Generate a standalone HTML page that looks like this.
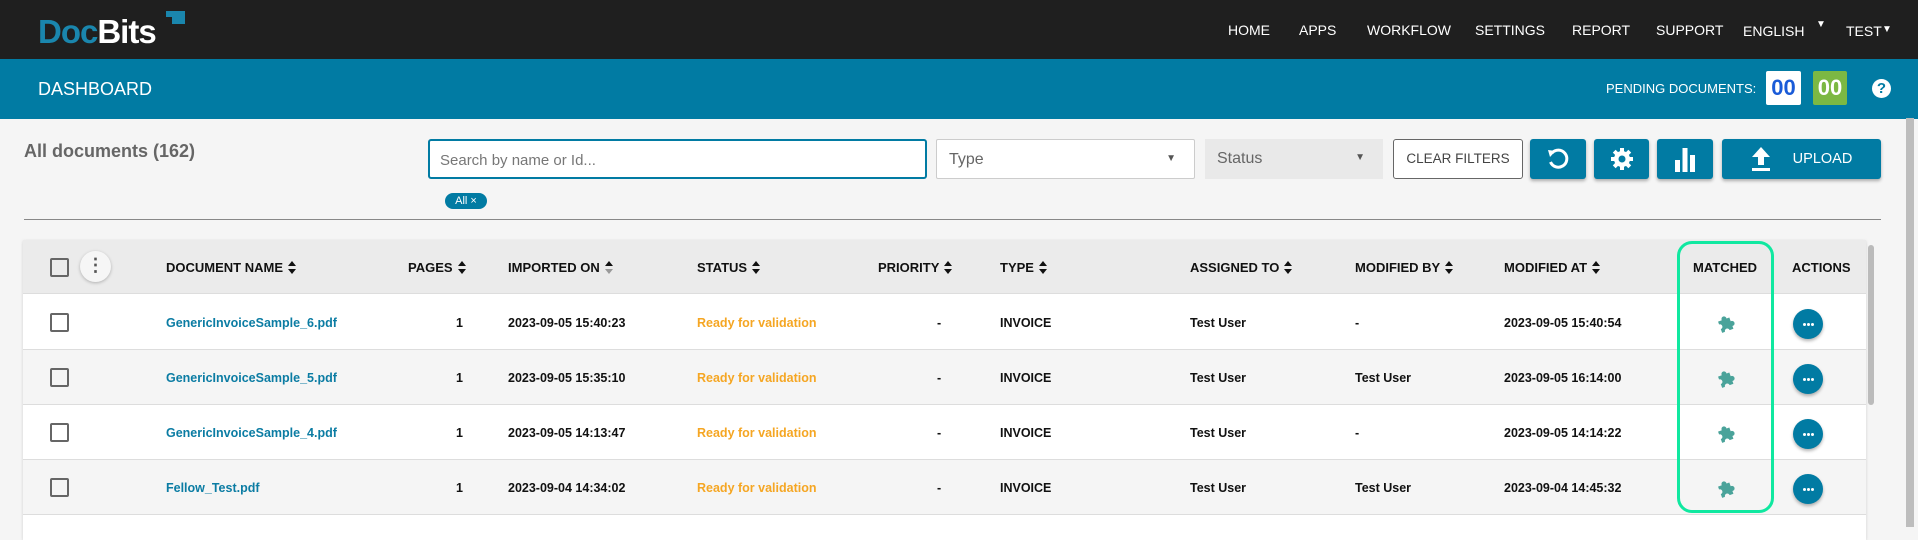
<!DOCTYPE html>
<html><head><meta charset="utf-8"><style>
*{margin:0;padding:0;box-sizing:border-box}
body{width:1918px;height:527px;overflow:hidden;background:#f5f5f5;font-family:"Liberation Sans",sans-serif;position:relative}
.a{position:absolute;white-space:nowrap}
.top{left:0;top:0;width:1918px;height:59px;background:#1f1f1f}
.nav{color:#fff;font-size:14px;top:22px}
.blue{left:0;top:59px;width:1918px;height:60px;background:#017ba3}
.btn{background:#017ba3;border-radius:3px;top:139px;height:40px;box-shadow:0 2px 3px rgba(0,0,0,.3);display:flex;align-items:center;justify-content:center}
.card{left:23px;top:240px;width:1843px;height:300px;background:#fff;box-shadow:0 1px 3px rgba(0,0,0,.15)}
.hdr{left:23px;top:240px;width:1843px;height:54px;background:#ebebeb;border-bottom:1px solid #ddd}
.row{left:23px;width:1843px;height:55px;border-bottom:1px solid #ddd}
.h{font-size:13px;font-weight:bold;color:#111;top:260px}
.t{font-size:12.5px;font-weight:bold;color:#111}
.cb{width:19px;height:19px;border:2px solid #666;border-radius:2px}
.sort{display:inline-block;vertical-align:middle;margin-left:5px;width:8px;height:13px;position:relative;top:-1px}
.sort:before{content:"";position:absolute;top:0;left:0;border-left:4.5px solid transparent;border-right:4.5px solid transparent;border-bottom:5.5px solid #111}
.sort:after{content:"";position:absolute;bottom:0;left:0;border-left:4.5px solid transparent;border-right:4.5px solid transparent;border-top:5.5px solid #111}
.sort.g:after{border-top-color:#999}
.act{width:30px;height:30px;border-radius:50%;background:#017ba3;box-shadow:0 2px 3px rgba(0,0,0,.3)}
.act:before{content:"";position:absolute;left:10px;top:13.5px;width:3px;height:3px;border-radius:50%;background:#fff;box-shadow:4px 0 0 #fff,8px 0 0 #fff}
</style></head><body>
<div class="a top"></div>
<div class="a" style="left:38px;top:13px;font-size:33px;font-weight:bold;letter-spacing:-1px"><span style="color:#1a86ad">Doc</span><span style="color:#fff">Bits</span></div>
<div class="a" style="left:172px;top:11px;width:13px;height:13px;background:#1a86ad"></div>
<div class="a" style="left:166px;top:11px;width:7px;height:6px;background:#1a86ad"></div>
<div class="a nav" style="left:1228px">HOME</div>
<div class="a nav" style="left:1299px">APPS</div>
<div class="a nav" style="left:1367px">WORKFLOW</div>
<div class="a nav" style="left:1475px">SETTINGS</div>
<div class="a nav" style="left:1572px">REPORT</div>
<div class="a nav" style="left:1656px">SUPPORT</div>
<div class="a nav" style="left:1743px;top:23px">ENGLISH</div>
<div class="a nav" style="left:1816px;top:19px;font-size:10px">▼</div>
<div class="a nav" style="left:1846px;top:23px">TEST</div>
<div class="a nav" style="left:1882px;top:24px;font-size:10px">▼</div>
<div class="a blue"></div>
<div class="a" style="left:38px;top:79px;color:#fff;font-size:18px">DASHBOARD</div>
<div class="a" style="left:1606px;top:81px;color:#fff;font-size:13px">PENDING DOCUMENTS:</div>
<div class="a" style="left:1766px;top:71px;width:35px;height:34px;background:#fff;border-radius:2px;color:#1a5bd8;font-size:22px;font-weight:bold;text-align:center;line-height:34px">00</div>
<div class="a" style="left:1813px;top:71px;width:34px;height:34px;background:#7cb843;border-radius:2px;color:#fff;font-size:22px;font-weight:bold;text-align:center;line-height:34px">00</div>
<div class="a" style="left:1872px;top:79px;width:19px;height:19px;border-radius:50%;background:#fff;color:#017ba3;font-size:15px;font-weight:bold;text-align:center;line-height:19px">?</div>
<div class="a" style="left:24px;top:141px;font-size:18px;font-weight:bold;color:#666">All documents (162)</div>
<div class="a" style="left:428px;top:139px;width:499px;height:40px;border:2px solid #017ba3;border-radius:3px;background:#fff;padding:11px 10px;font-size:15px;color:#777">Search by name or Id...</div>
<div class="a" style="left:936px;top:139px;width:259px;height:40px;border:1px solid #ccc;border-radius:2px;background:#fff;padding:11px 12px;font-size:16px;color:#666">Type<span style="position:absolute;right:18px;top:13px;font-size:10px;color:#555">▼</span></div>
<div class="a" style="left:1205px;top:139px;width:178px;height:40px;background:#e9e9e9;padding:11px 12px;font-size:16px;color:#666">Status<span style="position:absolute;right:18px;top:13px;font-size:10px;color:#555">▼</span></div>
<div class="a" style="left:1393px;top:139px;width:130px;height:40px;border:1px solid #666;border-radius:3px;background:#fff;font-size:13.5px;color:#444;text-align:center;line-height:38px">CLEAR FILTERS</div>
<div class="a btn" style="left:1530px;width:56px"><svg width="24" height="24" viewBox="0 0 24 24"><path d="M6 6 A8.5 8.5 0 1 1 4.5 15" fill="none" stroke="#fff" stroke-width="3"/><path d="M2 3 L9.5 4 L4 10 Z" fill="#fff"/></svg></div>
<div class="a btn" style="left:1594px;width:55px"><svg width="24" height="24" viewBox="0 0 24 24"><g fill="#fff"><circle cx="12" cy="12" r="8"/><rect x="10" y="1" width="4" height="22"/><rect x="1" y="10" width="22" height="4"/><rect x="10" y="1" width="4" height="22" transform="rotate(45 12 12)"/><rect x="10" y="1" width="4" height="22" transform="rotate(-45 12 12)"/></g><circle cx="12" cy="12" r="3.5" fill="#017ba3"/></svg></div>
<div class="a btn" style="left:1657px;width:56px"><svg width="24" height="26" viewBox="0 0 24 26"><g fill="#fff"><rect x="2" y="14" width="5" height="12"/><rect x="9.5" y="2" width="5" height="24"/><rect x="17" y="9" width="5" height="17"/></g></svg></div>
<div class="a btn" style="left:1722px;width:159px"><svg width="20" height="26" viewBox="0 0 20 26" style="margin-right:22px"><g fill="#fff"><path d="M10 1 L19 11 H13 V19 H7 V11 H1 Z"/><rect x="1" y="22" width="18" height="3"/></g></svg><span style="color:#fff;font-size:14.5px">UPLOAD</span></div>
<div class="a" style="left:445px;top:193px;width:42px;height:16px;border-radius:8px;background:#017ba3;color:#fff;font-size:11px;text-align:center;line-height:16px">All ×</div>
<div class="a" style="left:24px;top:219px;width:1857px;height:1px;background:#888"></div>
<div class="a card"></div>
<div class="a hdr"></div>
<div class="a row" style="top:295px;background:#fff"></div>
<div class="a row" style="top:350px;background:#f5f5f5"></div>
<div class="a row" style="top:405px;background:#fff"></div>
<div class="a row" style="top:460px;background:#f5f5f5"></div>
<div class="a" style="left:1868px;top:245px;width:6px;height:160px;background:#bbb;border-radius:3px"></div>
<div class="a" style="left:1906px;top:118px;width:8px;height:409px;background:#bdbdbd"></div>
<div class="a cb" style="left:50px;top:258px"></div>
<div class="a" style="left:80px;top:251px;width:31px;height:31px;border-radius:50%;background:#f6f6f6;box-shadow:0 1px 3px rgba(0,0,0,.25);color:#555;font-size:18px;font-weight:bold;text-align:center;line-height:28px">⋮</div>
<div class="a h" style="left:166px">DOCUMENT NAME<span class="sort"></span></div>
<div class="a h" style="left:408px">PAGES<span class="sort"></span></div>
<div class="a h" style="left:508px">IMPORTED ON<span class="sort g"></span></div>
<div class="a h" style="left:697px">STATUS<span class="sort"></span></div>
<div class="a h" style="left:878px">PRIORITY<span class="sort"></span></div>
<div class="a h" style="left:1000px">TYPE<span class="sort"></span></div>
<div class="a h" style="left:1190px">ASSIGNED TO<span class="sort"></span></div>
<div class="a h" style="left:1355px">MODIFIED BY<span class="sort"></span></div>
<div class="a h" style="left:1504px">MODIFIED AT<span class="sort"></span></div>
<div class="a h" style="left:1693px">MATCHED</div>
<div class="a h" style="left:1792px">ACTIONS</div>
<div class="a" style="left:1677px;top:241px;width:97px;height:272px;border:3px solid #10e8a0;border-radius:15px"></div>

<div class="a cb" style="left:50px;top:313px"></div>
<div class="a t" style="left:166px;top:316px;color:#0b7ca3">GenericInvoiceSample_6.pdf</div>
<div class="a t" style="left:456px;top:316px">1</div>
<div class="a t" style="left:508px;top:316px">2023-09-05 15:40:23</div>
<div class="a t" style="left:697px;top:316px;color:#f5a623">Ready for validation</div>
<div class="a t" style="left:937px;top:316px">-</div>
<div class="a t" style="left:1000px;top:316px">INVOICE</div>
<div class="a t" style="left:1190px;top:316px">Test User</div>
<div class="a t" style="left:1355px;top:316px">-</div>
<div class="a t" style="left:1504px;top:316px">2023-09-05 15:40:54</div>

<div class="a cb" style="left:50px;top:368px"></div>
<div class="a t" style="left:166px;top:371px;color:#0b7ca3">GenericInvoiceSample_5.pdf</div>
<div class="a t" style="left:456px;top:371px">1</div>
<div class="a t" style="left:508px;top:371px">2023-09-05 15:35:10</div>
<div class="a t" style="left:697px;top:371px;color:#f5a623">Ready for validation</div>
<div class="a t" style="left:937px;top:371px">-</div>
<div class="a t" style="left:1000px;top:371px">INVOICE</div>
<div class="a t" style="left:1190px;top:371px">Test User</div>
<div class="a t" style="left:1355px;top:371px">Test User</div>
<div class="a t" style="left:1504px;top:371px">2023-09-05 16:14:00</div>

<div class="a cb" style="left:50px;top:423px"></div>
<div class="a t" style="left:166px;top:426px;color:#0b7ca3">GenericInvoiceSample_4.pdf</div>
<div class="a t" style="left:456px;top:426px">1</div>
<div class="a t" style="left:508px;top:426px">2023-09-05 14:13:47</div>
<div class="a t" style="left:697px;top:426px;color:#f5a623">Ready for validation</div>
<div class="a t" style="left:937px;top:426px">-</div>
<div class="a t" style="left:1000px;top:426px">INVOICE</div>
<div class="a t" style="left:1190px;top:426px">Test User</div>
<div class="a t" style="left:1355px;top:426px">-</div>
<div class="a t" style="left:1504px;top:426px">2023-09-05 14:14:22</div>

<div class="a cb" style="left:50px;top:478px"></div>
<div class="a t" style="left:166px;top:481px;color:#0b7ca3">Fellow_Test.pdf</div>
<div class="a t" style="left:456px;top:481px">1</div>
<div class="a t" style="left:508px;top:481px">2023-09-04 14:34:02</div>
<div class="a t" style="left:697px;top:481px;color:#f5a623">Ready for validation</div>
<div class="a t" style="left:937px;top:481px">-</div>
<div class="a t" style="left:1000px;top:481px">INVOICE</div>
<div class="a t" style="left:1190px;top:481px">Test User</div>
<div class="a t" style="left:1355px;top:481px">Test User</div>
<div class="a t" style="left:1504px;top:481px">2023-09-04 14:45:32</div>

<svg class="a" style="left:1716px;top:313px" width="20" height="20" viewBox="0 0 20 20"><path id="pz" d="M3 6 H7 A2.5 2.5 0 1 1 12 5 V6 H15 V10 A2.5 2.5 0 1 1 16 15 H15 V18 H11 A2.5 2.5 0 1 0 6 18 H3 V14 A2.5 2.5 0 1 0 3 9 Z" fill="#4aa39a" transform="rotate(-20 10 10)"/></svg>
<svg class="a" style="left:1716px;top:368px" width="20" height="20" viewBox="0 0 20 20"><use href="#pz"/></svg>
<svg class="a" style="left:1716px;top:423px" width="20" height="20" viewBox="0 0 20 20"><use href="#pz"/></svg>
<svg class="a" style="left:1716px;top:478px" width="20" height="20" viewBox="0 0 20 20"><use href="#pz"/></svg>
<div class="a act" style="left:1793px;top:309px"></div>
<div class="a act" style="left:1793px;top:364px"></div>
<div class="a act" style="left:1793px;top:419px"></div>
<div class="a act" style="left:1793px;top:474px"></div>
</body></html>
